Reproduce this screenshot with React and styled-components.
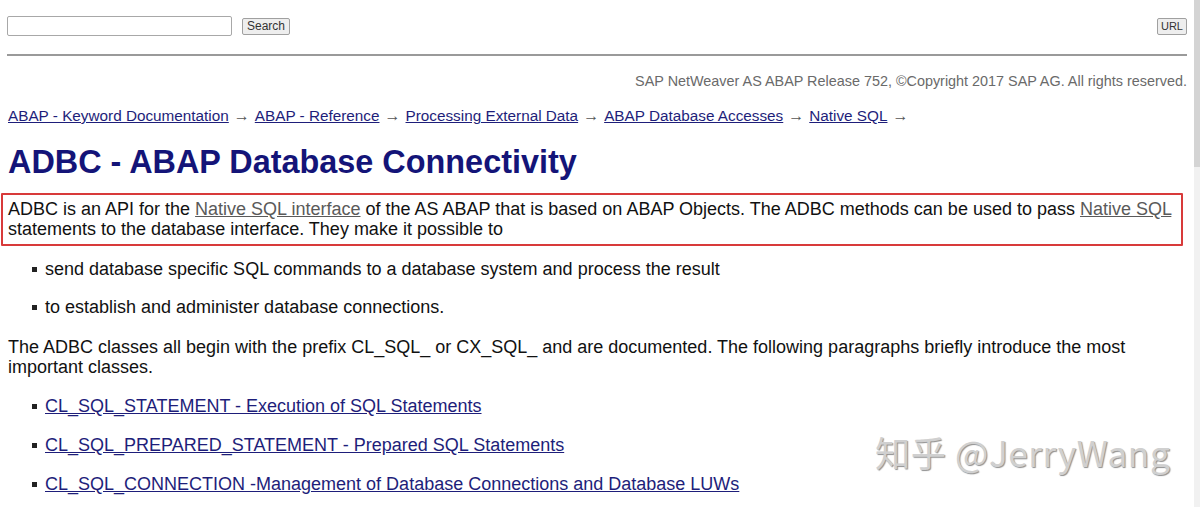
import React from "react";
import styled, { createGlobalStyle } from "styled-components";

const GlobalStyle = createGlobalStyle`
  html, body { margin: 0; padding: 0; background: #fff; overflow: hidden; }
  body { font-family: "Liberation Sans", Arial, sans-serif; color: #111; }
`;

const Page = styled.div`
  display: flex;
  width: 1200px;
  height: 507px;
  position: relative;
  overflow: hidden;
`;

const Main = styled.div`
  flex: 1;
  padding: 0 7px 0 7px;
  display: flex;
  flex-direction: column;
`;

const Scrollbar = styled.div`
  width: 6px;
  background: #f1f1f1;
  display: flex;
  flex-direction: column;
`;

const Thumb = styled.div`
  height: 167px;
  background: #d4d4d4;
`;

const TopBar = styled.div`
  display: flex;
  align-items: center;
  padding-top: 16px;
  height: 20px;
`;

const SearchInput = styled.input`
  width: 225px;
  height: 20px;
  box-sizing: border-box;
  border: 1px solid #a8a8a8;
  border-radius: 2px;
  background: #fff;
  margin: 0;
`;

const SmallButton = styled.button`
  font-family: "Liberation Sans", Arial, sans-serif;
  font-size: ${(p) => (p.$small ? "11px" : "12px")};
  color: #333;
  height: 17px;
  padding: 0 ${(p) => (p.$small ? "3px" : "4px")};
  line-height: 15px;
  border: 1px solid #a0a0a0;
  border-radius: 2px;
  background: #eeeeee;
  margin-left: ${(p) => (p.$push ? "auto" : "10px")};
`;

const Rule = styled.hr`
  margin: 18px 0 0 0;
  border: 0;
  border-top: 2px solid #9a9a9a;
`;

const Copyright = styled.div`
  text-align: right;
  font-size: 14.4px;
  color: #6a6a6a;
  margin-top: 17px;
`;

const Crumbs = styled.div`
  font-size: 15.3px;
  margin-top: 18px;
  padding-left: 1px;
  color: #444;
`;

const NavLink = styled.a`
  color: #1e1e7a;
  text-decoration: underline;
`;

const Arrow = styled.span`
  color: #555;
  margin: 0 5px;
  font-size: 16px;
`;

const Title = styled.h1`
  font-size: 32.4px;
  font-weight: bold;
  color: #141478;
  margin: 17px 0 0 1px;
  line-height: 40px;
`;

const HighlightBox = styled.div`
  margin: 11px 4px 0 -6px;
  border: 2px solid #d83a3a;
  padding: 4px 6px 5px 4px;
  border-radius: 1px;
`;

const Para = styled.p`
  font-size: 18px;
  line-height: 20px;
  margin: ${(p) => p.$m || "0"};
  padding-left: 1px;
`;

const GrayLink = styled.a`
  color: #5a5a5a;
  text-decoration: underline;
`;

const List = styled.ul`
  list-style: none;
  margin: ${(p) => p.$m || "0"};
  padding: 0 0 0 25px;
  display: flex;
  flex-direction: column;
  gap: ${(p) => p.$gap || "18px"};
`;

const Item = styled.li`
  display: flex;
  align-items: center;
  font-size: 18px;
  line-height: 20px;
  &::before {
    content: "";
    width: 5px;
    height: 5px;
    background: #222;
    margin-right: 8px;
    flex-shrink: 0;
  }
`;

const ClassLink = styled.a`
  font-family: "Liberation Sans Narrow", "Liberation Sans", Arial, sans-serif;
  font-size: 18px;
  color: #1e1e7a;
  text-decoration: underline;
`;

const Watermark = styled.div`
  position: absolute;
  left: 875px;
  top: 426px;
  font-family: "Noto Sans CJK SC", "Liberation Sans", sans-serif;
  font-size: 35.3px;
  color: #d0d0d0;
  letter-spacing: 0.5px;
  text-shadow: 1px 1px 1px #909090, -1px -1px 0 #fff;
  white-space: nowrap;
`;

export default function App() {
  return (
    <Page>
      <GlobalStyle />
      <Main>
        <TopBar>
          <SearchInput />
          <SmallButton>Search</SmallButton>
          <SmallButton $push $small>URL</SmallButton>
        </TopBar>
        <Rule />
        <Copyright>
          SAP NetWeaver AS ABAP Release 752, ©Copyright 2017 SAP AG. All rights reserved.
        </Copyright>
        <Crumbs>
          <NavLink>ABAP - Keyword Documentation</NavLink>
          <Arrow>→</Arrow>
          <NavLink>ABAP - Reference</NavLink>
          <Arrow>→</Arrow>
          <NavLink>Processing External Data</NavLink>
          <Arrow>→</Arrow>
          <NavLink>ABAP Database Accesses</NavLink>
          <Arrow>→</Arrow>
          <NavLink>Native SQL</NavLink>
          <Arrow>→</Arrow>
        </Crumbs>
        <Title>ADBC - ABAP Database Connectivity</Title>
        <HighlightBox>
          <Para>
            ADBC is an API for the <GrayLink>Native SQL interface</GrayLink> of the AS ABAP that is
            based on ABAP Objects. The ADBC methods can be used to pass{" "}
            <GrayLink>Native SQL</GrayLink> statements to the database interface. They make it
            possible to
          </Para>
        </HighlightBox>
        <List $m="13px 0 0 0">
          <Item>send database specific SQL commands to a database system and process the result</Item>
          <Item>to establish and administer database connections.</Item>
        </List>
        <Para $m="20px 0 0 0">
          The ADBC classes all begin with the prefix CL_SQL_ or CX_SQL_ and are documented. The
          following paragraphs briefly introduce the most important classes.
        </Para>
        <List $m="19px 0 0 0" $gap="19px">
          <Item>
            <ClassLink>CL_SQL_STATEMENT - Execution of SQL Statements</ClassLink>
          </Item>
          <Item>
            <ClassLink>CL_SQL_PREPARED_STATEMENT - Prepared SQL Statements</ClassLink>
          </Item>
          <Item>
            <ClassLink>CL_SQL_CONNECTION -Management of Database Connections and Database LUWs</ClassLink>
          </Item>
        </List>
      </Main>
      <Scrollbar>
        <Thumb />
      </Scrollbar>
      <Watermark>知乎 @JerryWang</Watermark>
    </Page>
  );
}
